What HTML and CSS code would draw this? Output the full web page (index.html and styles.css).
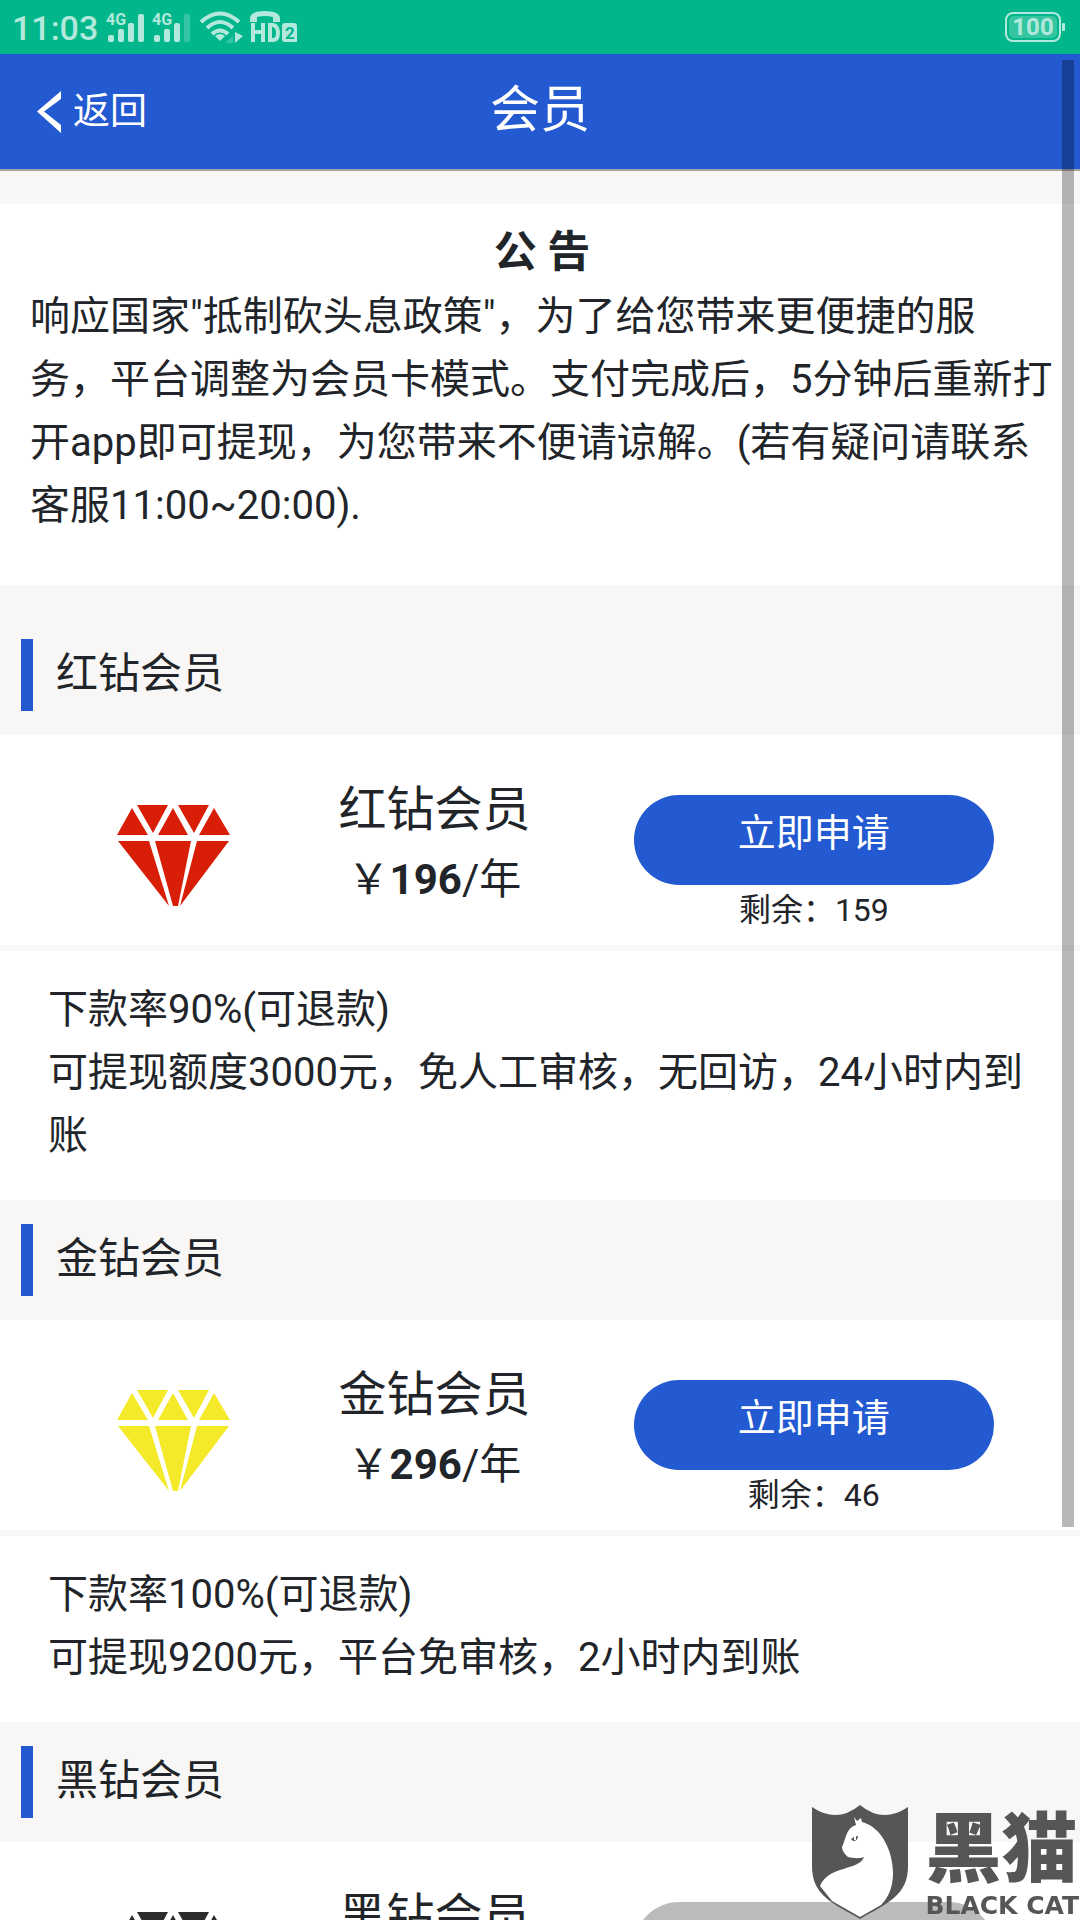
FILE: index.html
```html
<!DOCTYPE html>
<html lang="zh-CN">
<head>
    <meta charset="UTF-8">
    <meta name="viewport" content="width=device-width, initial-scale=1.0">
    <title>会员</title>
    <link rel="stylesheet" href="styles.css">
</head>
<body>
    <svg class="defs" aria-hidden="true">
        <symbol id="diamond" viewBox="0 0 115 103">
            <path d="M21 1H52L37 29ZM62 1H93L78 29ZM16 4L32 31H1ZM57 4L72 31H42ZM98 4L114 31H83ZM2 37H33L53 102ZM39 37H75L62 102H57ZM81 37H113L64 102Z"/>
        </symbol>
    </svg>

    <div class="page">
        <div class="status-bar">
            <span class="time">11:03</span>
            <svg class="status-icons" viewBox="0 0 194 34" fill="currentColor" role="img" aria-label="信号">
                <text class="net" x="0" y="15">4G</text>
                <rect x="2" y="25" width="6" height="7" rx="2"/>
                <rect x="12" y="19" width="6" height="13" rx="2"/>
                <rect x="22" y="13" width="6" height="19" rx="2"/>
                <rect x="32" y="4" width="6" height="28" rx="2"/>
                <text class="net" x="46" y="15">4G</text>
                <rect x="48" y="25" width="6" height="7" rx="2"/>
                <rect x="58" y="19" width="6" height="13" rx="2"/>
                <rect x="68" y="13" width="6" height="19" rx="2"/>
                <rect x="78" y="4" width="6" height="28" rx="2" opacity=".3"/>
                <g fill="none" stroke="currentColor" stroke-width="4">
                    <path d="M95 12Q114 -5 133 12"/>
                    <path d="M101 18Q114 6 127 18"/>
                    <path d="M106 24Q114 17 122 24"/>
                </g>
                <path d="M109 26Q114 22 119 26L114 31Z"/>
                <path d="M127 26V33H119Z" opacity=".3"/>
                <path d="M129 22L137 26L129 33Z"/>
                <path d="M144 12V8Q145 1 159 1T174 8V12H167V7Q159 5 151 7V12Z"/>
                <path d="M147 13V32M157 13V32M147 22H157M164 15V30H167Q172 30 172 23T167 15Z" fill="none" stroke="currentColor" stroke-width="4"/>
                <path d="M179 13H188Q191 13 191 16V32H179Q176 32 176 29V16Q176 13 179 13Z"/>
                <text class="sim" x="179" y="29">2</text>
            </svg>
            <div class="battery"><span>100</span></div>
        </div>

        <header class="header">
            <a class="back" href="#">
                <svg class="back-icon" viewBox="0 0 24 42" aria-hidden="true"><path d="M24 0V8L7 20.500L24 34V42L0 20.500Z"/></svg>
                返回
            </a>
            <h1>会员</h1>
        </header>

        <section class="notice">
            <h2>公 告</h2>
            <p>响应国家"抵制砍头息政策"，为了给您带来更便捷的服务，平台调整为会员卡模式。支付完成后，5分钟后重新打开app即可提现，为您带来不便请谅解。(若有疑问请联系客服11:00~20:00).</p>
        </section>

        <section class="member">
            <h2 class="member-title">红钻会员</h2>
            <div class="card">
                <svg class="gem red" aria-hidden="true"><use href="#diamond"/></svg>
                <div class="info">
                    <h3>红钻会员</h3>
                    <p class="price">￥<b>196</b>/年</p>
                </div>
                <div class="action">
                    <button class="btn" type="button">立即申请</button>
                    <p class="left">剩余：159</p>
                </div>
            </div>
            <p class="desc">下款率90%(可退款)<br>可提现额度3000元，免人工审核，无回访，24小时内到账</p>
        </section>

        <section class="member">
            <h2 class="member-title">金钻会员</h2>
            <div class="card">
                <svg class="gem gold" aria-hidden="true"><use href="#diamond"/></svg>
                <div class="info">
                    <h3>金钻会员</h3>
                    <p class="price">￥<b>296</b>/年</p>
                </div>
                <div class="action">
                    <button class="btn" type="button">立即申请</button>
                    <p class="left">剩余：46</p>
                </div>
            </div>
            <p class="desc">下款率100%(可退款)<br>可提现9200元，平台免审核，2小时内到账</p>
        </section>

        <section class="member">
            <h2 class="member-title">黑钻会员</h2>
            <div class="card">
                <svg class="gem black" aria-hidden="true"><use href="#diamond"/></svg>
                <div class="info">
                    <h3>黑钻会员</h3>
                </div>
                <div class="action">
                    <button class="btn" type="button" disabled></button>
                </div>
            </div>
        </section>
    </div>

    <div class="scrollbar"></div>

    <div class="watermark">
        <svg class="shield" viewBox="0 0 98 116" aria-hidden="true">
            <path class="shield-bg" d="M1 3Q26 20 49 1Q72 20 97 3V62C97 92 76 99 49 115C22 99 1 92 1 62Z"/>
            <path class="cat" d="M43 13L46 17L50 14L51 18C71 23 82 48 82 69C82 82 78 93 70 101L49 113L21 97L9 82C18 61 48 67 53 53C48 55 42 54 37 53C33 50 31 46 31 43C35 35 35 24 45 21Z"/>
            <path class="eye" d="M40 35Q43 32 47 32Q47 37 42 37Z"/>
            <path class="pupil" d="M44 32V36"/>
        </svg>
        <div class="brand">
            <span class="brand-cn">黑猫</span>
            <span class="brand-en">BLACK CAT</span>
        </div>
    </div>
</body>
</html>
```
FILE: styles.css
```css
* {
    box-sizing: border-box;
}
body {
    margin: 0;
    background: #f8f7f5;
    color: #212529;
    font-family: Roboto, "Noto Sans CJK SC", sans-serif;
    font-size: 40px;
    line-height: 63px;
}
h1, h2, h3, p {
    margin: 0;
    font-weight: normal;
}
.defs {
    display: none;
}
.page {
    height: 100vh;
    overflow-y: auto;
    scrollbar-width: none;
}

/* status bar */
.status-bar {
    display: flex;
    align-items: center;
    height: 54px;
    padding: 0 14px 0 12px;
    background: #00b68a;
    color: #b3e9dc;
}
.time {
    padding-top: 2px;
    font-size: 34px;
    font-weight: 500;
    margin-right: 8px;
}
.status-icons {
    width: 194px;
    height: 34px;
}
.net {
    font-size: 16px;
    font-weight: bold;
}
.sim {
    font-size: 17px;
    font-weight: bold;
    fill: #00b68a;
}
.battery {
    position: relative;
    margin-left: auto;
    margin-right: 5px;
    width: 56px;
    height: 30px;
    padding: 2px;
    border: 2px solid #b3e9dc;
    border-radius: 8px;
}
.battery span {
    display: block;
    border-radius: 5px;
    background: #36c5a1;
    font-size: 24px;
    font-weight: bold;
    line-height: 22px;
    text-align: center;
}
.battery::after {
    content: "";
    position: absolute;
    right: -6px;
    top: 9px;
    width: 3px;
    height: 8px;
    border-radius: 1px;
    background: #b3e9dc;
}

/* header */
.header {
    display: grid;
    grid-template-columns: 1fr auto 1fr;
    align-items: center;
    height: 117px;
    margin-bottom: 33px;
    padding: 0 37px;
    border-bottom: 2px solid #a0a3a8;
    background: #2359d1;
    color: #fff;
}
.back {
    display: flex;
    align-items: center;
    gap: 12px;
    color: #fff;
    font-size: 37px;
    text-decoration: none;
}
.back-icon {
    width: 24px;
    height: 42px;
    fill: #fff;
}
.header h1 {
    padding-bottom: 2px;
    font-size: 50px;
}

.notice {
    padding: 17px 26px 48px 30px;
    background: #fff;
}
.notice h2 {
    margin-bottom: 1px;
    font-size: 43px;
    font-weight: bold;
    text-align: center;
}
.notice + .member {
    padding-top: 30px;
}

/* membership blocks */
.member-title {
    margin: 24px 21px;
    padding: 0 0 2px 23px;
    border-left: 12px solid #2359d1;
    font-size: 42px;
    line-height: 70px;
}
.member {
    display: flow-root;
}
.card {
    display: grid;
    grid-template-columns: 56fr 43fr 101fr;
    justify-items: center;
    height: 216px;
    padding-left: 26px;
    border-bottom: 6px solid #f8f7f5;
    background: #fff;
}
.gem {
    width: 115px;
    height: 103px;
    margin-top: 69px;
}
.red {
    fill: #d81e06;
}
.gold {
    fill: #f4ea2a;
}
.black {
    fill: #2c2c2c;
}
.info {
    padding-top: 38px;
    text-align: center;
    white-space: nowrap;
}
.info h3 {
    font-size: 48px;
    line-height: 74px;
}
.price {
    font-size: 42px;
    line-height: 66px;
}
.action {
    padding-top: 60px;
    text-align: center;
}
.btn {
    display: block;
    width: 360px;
    height: 90px;
    padding: 0 0 14px;
    border: none;
    border-radius: 45px;
    background: #2359d1;
    color: #fff;
    font-family: inherit;
    font-size: 38px;
    line-height: 60px;
    cursor: pointer;
}
.btn:disabled {
    background: #bbb;
}
.left {
    font-size: 32px;
    line-height: 50px;
}
.desc {
    padding: 27px 48px 33px;
    background: #fff;
}

.scrollbar {
    position: fixed;
    top: 60px;
    right: 6px;
    width: 12px;
    height: 1467px;
    background: rgba(0, 0, 0, .28);
}

/* logo over the page corner */
.watermark {
    position: fixed;
    right: 1px;
    bottom: 0;
    display: flex;
    gap: 16px;
    color: #575556;
}
.shield {
    width: 98px;
    height: 116px;
}
.shield-bg {
    fill: #575556;
}
.cat {
    fill: #fff;
}
.eye {
    fill: #575556;
}
.pupil {
    stroke: #fff;
    stroke-width: 2;
}
.brand {
    display: flex;
    flex-direction: column;
    padding-top: 2px;
}
.brand-cn {
    font-size: 76px;
    font-weight: 900;
    line-height: 88px;
}
.brand-en {
    font-family: "DejaVu Sans", sans-serif;
    font-size: 25px;
    font-weight: bold;
    line-height: 24px;
}
```
